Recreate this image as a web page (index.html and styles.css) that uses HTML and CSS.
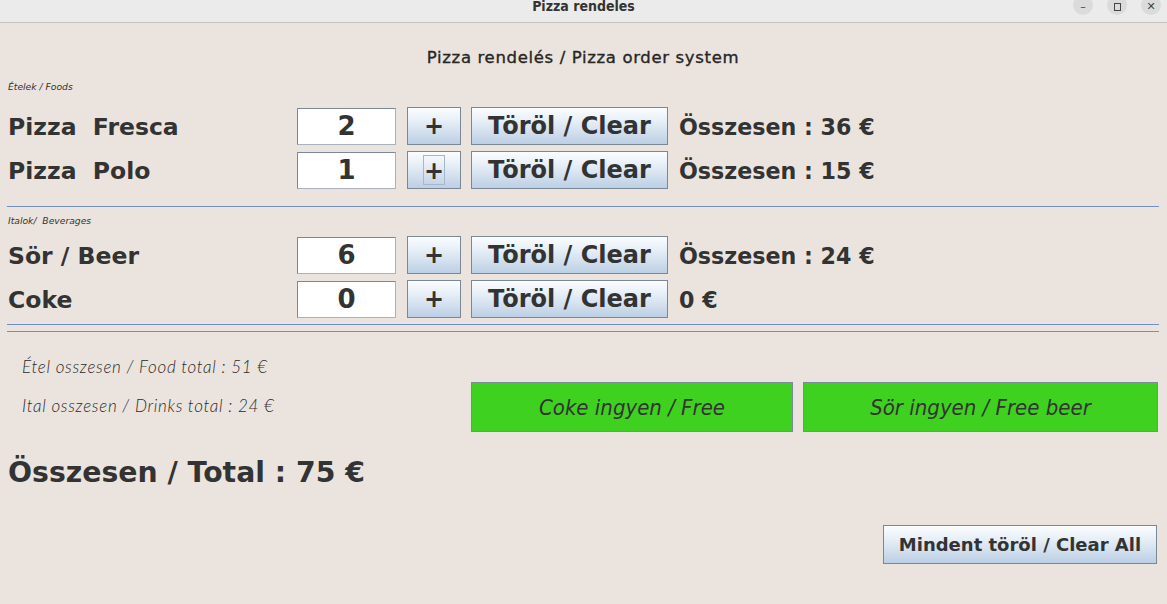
FILE: index.html
```html
<!DOCTYPE html>
<html>
<head>
<meta charset="utf-8">
<title>Pizza rendeles</title>
<link rel="stylesheet" href="styles.css">
</head>
<body>
<div class="titlebar">
  <div class="tb-side"></div>
  <div class="tb-title">Pizza rendeles</div>
  <div class="tb-controls">
    <span class="wbtn">&#x2013;</span>
    <span class="wbtn"><span class="sq"></span></span>
    <span class="wbtn">&#x2715;</span>
  </div>
</div>
<div class="main">
  <div class="header">Pizza rendelés / Pizza order system</div>

  <div class="section-label">Ételek / Foods</div>
  <div class="row">
    <div class="name">Pizza&nbsp; Fresca</div>
    <div class="qty">2</div>
    <button class="btn plus">+</button>
    <button class="btn clear">Töröl / Clear</button>
    <div class="sum">Összesen : 36 €</div>
  </div>
  <div class="row">
    <div class="name">Pizza&nbsp; Polo</div>
    <div class="qty">1</div>
    <button class="btn plus"><span class="focus">+</span></button>
    <button class="btn clear">Töröl / Clear</button>
    <div class="sum">Összesen : 15 €</div>
  </div>

  <div class="rule rule-a"></div>

  <div class="section-label sec2">Italok/&nbsp; Beverages</div>
  <div class="row">
    <div class="name">Sör / Beer</div>
    <div class="qty">6</div>
    <button class="btn plus">+</button>
    <button class="btn clear">Töröl / Clear</button>
    <div class="sum">Összesen : 24 €</div>
  </div>
  <div class="row">
    <div class="name">Coke</div>
    <div class="qty">0</div>
    <button class="btn plus">+</button>
    <button class="btn clear">Töröl / Clear</button>
    <div class="sum">0 €</div>
  </div>

  <div class="rule rule-b"></div>
  <div class="rule rule-c"></div>

  <div class="summary">
    <div class="subtotals">
      <div class="subline">Étel osszesen / Food total : 51 €</div>
      <div class="subline second">Ital osszesen / Drinks total : 24 €</div>
    </div>
    <button class="free free-coke">Coke ingyen / Free</button>
    <button class="free free-beer">Sör ingyen / Free beer</button>
  </div>

  <div class="total">Összesen / Total : 75 €</div>

  <div class="footer">
    <button class="btn clear-all">Mindent töröl / Clear All</button>
  </div>
</div>
</body>
</html>
```

FILE: styles.css
```css
html, body {
  margin: 0;
  padding: 0;
}
body {
  width: 1167px;
  height: 604px;
  overflow: hidden;
  background: #ebe4de;
  color: #333333;
  font-family: "DejaVu Sans", sans-serif;
}

/* title bar */
.titlebar {
  height: 22px;
  background: #ebebeb;
  border-bottom: 1px solid #c4c4c4;
  display: grid;
  grid-template-columns: 1fr auto 1fr;
  align-items: start;
}
.tb-title {
  font-family: "DejaVu Sans Condensed", "DejaVu Sans", sans-serif;
  font-stretch: condensed;
  font-weight: bold;
  font-size: 14px;
  line-height: 12px;
  color: #333;
}
.tb-controls {
  display: flex;
  justify-content: flex-end;
  gap: 14px;
  padding-right: 6px;
  margin-top: -5px;
}
.wbtn {
  width: 20px;
  height: 20px;
  border-radius: 50%;
  background: #dbdbdb;
  display: flex;
  align-items: center;
  justify-content: center;
  font-size: 11px;
  color: #444;
  line-height: 1;
  padding-top: 3px;
  box-sizing: border-box;
}
.sq {
  width: 7px;
  height: 8px;
  border: 1px solid #444;
  box-sizing: border-box;
}

.main {
  padding: 0 8px 0 7px;
}
.header {
  margin-top: 25px;
  height: 20px;
  line-height: 20px;
  text-align: center;
  font-size: 16.5px;
  letter-spacing: 0.65px;
  color: #262626;
  -webkit-text-stroke: 0.35px #262626;
}
.section-label {
  margin-top: 13px;
  height: 12px;
  line-height: 12px;
  font-family: "DejaVu Sans", sans-serif;
  font-style: italic;
  font-size: 9.2px;
  padding-left: 1px;
}
.section-label.sec2 {
  margin-top: 8px;
}

.row {
  display: flex;
  align-items: center;
  height: 38px;
  margin-top: 6px;
}
.section-label + .row {
  margin-top: 14px;
}
.sec2 + .row {
  margin-top: 9px;
}
.name {
  width: 290px;
  font-weight: bold;
  font-size: 23.5px;
  padding-left: 1px;
  padding-top: 1px;
  box-sizing: border-box;
}
.qty {
  width: 99px;
  height: 37px;
  box-sizing: border-box;
  background: #ffffff;
  border: 1px solid #7d8896;
  border-right-color: #a8b3bf;
  border-bottom-color: #a8b3bf;
  text-align: center;
  font-weight: bold;
  font-size: 26px;
  line-height: 35px;
}
.btn {
  height: 38px;
  box-sizing: border-box;
  border: 1px solid #7a8794;
  background: linear-gradient(to bottom, #fbfdff 0%, #e4edf6 40%, #bccfe4 100%);
  color: #333;
  font-family: "DejaVu Sans", sans-serif;
  font-weight: bold;
  padding: 0;
  display: flex;
  align-items: center;
  justify-content: center;
}
.plus {
  width: 54px;
  margin-left: 11px;
  font-size: 24px;
}
.focus {
  display: inline-block;
  width: 22px;
  height: 30px;
  line-height: 30px;
  border: 1px solid #a7b6c8;
  box-sizing: border-box;
}
.clear {
  width: 197px;
  margin-left: 10px;
  font-size: 24px;
}
.sum {
  margin-left: 11px;
  font-weight: bold;
  font-size: 22.2px;
  padding-top: 1px;
}

.rule {
  height: 1px;
  background: #7390c6;
}
.rule-a { margin-top: 17px; }
.rule-b { margin-top: 6px; }
.rule-c { margin-top: 6px; }

.summary {
  display: flex;
  align-items: flex-start;
  margin-top: 25px;
}
.subtotals {
  width: 464px;
  padding-left: 15px;
  box-sizing: border-box;
  font-family: "Lato", sans-serif;
  font-style: italic;
  font-weight: 300;
  font-size: 17px;
  letter-spacing: 0.7px;
  color: #2a2a2a;
}
.subline {
  height: 20px;
  line-height: 20px;
}
.subline.second {
  margin-top: 19px;
}
.free {
  margin-top: 25px;
  height: 50px;
  box-sizing: border-box;
  background: #3fd11f;
  border: 1px solid #7a8a9a;
  color: #333;
  font-family: "DejaVu Sans", sans-serif;
  font-stretch: condensed;
  font-style: italic;
  font-size: 22px;
  padding: 0;
}
.free-coke { width: 322px; }
.free-beer { width: 355px; margin-left: 10px; }

.total {
  margin-top: 24px;
  height: 34px;
  line-height: 34px;
  font-weight: bold;
  font-size: 28.3px;
  padding-left: 1px;
}

.footer {
  display: flex;
  justify-content: flex-end;
  margin-top: 35px;
  padding-right: 2px;
}
.clear-all {
  width: 274px;
  height: 39px;
  font-size: 18px;
}
```
